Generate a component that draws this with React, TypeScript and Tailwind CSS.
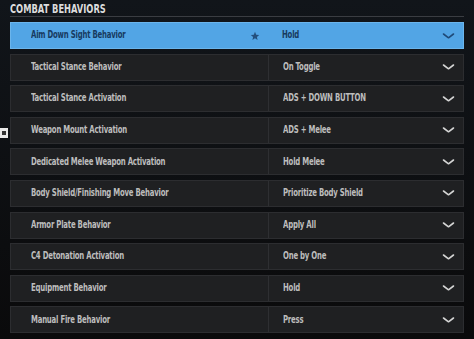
import React from "react";

const rows: [string, string][] = [
  ["Aim Down Sight Behavior", "Hold"],
  ["Tactical Stance Behavior", "On Toggle"],
  ["Tactical Stance Activation", "ADS + DOWN BUTTON"],
  ["Weapon Mount Activation", "ADS + Melee"],
  ["Dedicated Melee Weapon Activation", "Hold Melee"],
  ["Body Shield/Finishing Move Behavior", "Prioritize Body Shield"],
  ["Armor Plate Behavior", "Apply All"],
  ["C4 Detonation Activation", "One by One"],
  ["Equipment Behavior", "Hold"],
  ["Manual Fire Behavior", "Press"],
];

const font = {
  fontFamily: '"DejaVu Sans Condensed", "Liberation Sans", sans-serif',
};

function Chevron({ color }: { color: string }) {
  return (
    <svg width="13" height="8" viewBox="0 0 13 8" fill="none">
      <path d="M1.5 2 L6.5 5.8 L11.5 2" stroke={color} strokeWidth="1.6" strokeLinecap="round" strokeLinejoin="round" />
    </svg>
  );
}

export default function App() {
  return (
    <div
      className="relative w-[474px] h-[339px] overflow-hidden bg-[#0a0b0d] bg-gradient-to-b from-[#11151a] to-[#0a0a0b] flex flex-col px-[10px]"
      style={font}
    >
      <div className="pt-[4px] h-[17px] border-b border-[#3a3d42] flex items-start">
        <span className="inline-block origin-left scale-x-[0.77] whitespace-nowrap text-[12px] leading-[11px] font-bold text-[#dcdcdc]">
          COMBAT BEHAVIORS
        </span>
      </div>
      <div className="flex flex-col gap-[4.6px] mt-[5px]">
        {rows.map(([label, value], i) => {
          const active = i === 0;
          const txt = active
            ? "inline-block origin-left scale-x-[0.7] whitespace-nowrap text-[11px] font-bold tracking-[-0.3px] text-[#173a5f]"
            : "inline-block origin-left scale-x-[0.7] whitespace-nowrap text-[11px] font-bold tracking-[-0.3px] text-[#bdbdbd]";
          return (
            <div
              key={label}
              className={
                active
                  ? "h-[27px] flex items-center bg-[#52a5e5] border border-[#6bb5ec]"
                  : "h-[27px] flex items-center bg-[#1f2022] border border-[#2c2d30]"
              }
            >
              <div className="w-[257px] h-full flex items-center pl-[20px] pr-[8px] justify-between">
                <span className={txt}>{label}</span>
                {active && (
                  <svg width="10" height="10" viewBox="0 0 24 24">
                    <path
                      d="M12 2l2.9 6.9 7.1.6-5.4 4.7 1.6 7.1L12 17.5 5.8 21.3l1.6-7.1L2 9.5l7.1-.6z"
                      fill="#24507e"
                    />
                  </svg>
                )}
              </div>
              <div
                className={
                  active
                    ? "flex-1 h-full flex items-center justify-between pl-[14px] pr-[8px]"
                    : "flex-1 h-full flex items-center justify-between pl-[14px] pr-[8px] border-l border-[#2e2f32]"
                }
              >
                <span className={txt}>{value}</span>
                <Chevron color={active ? "#1f4a78" : "#d4d4d4"} />
              </div>
            </div>
          );
        })}
      </div>
      <div className="absolute left-0 top-[128px] w-[8px] h-[10px] bg-[#e8e8e8] flex items-center justify-center">
        <div className="w-[4px] h-[4px] bg-[#333]" />
      </div>
    </div>
  );
}
